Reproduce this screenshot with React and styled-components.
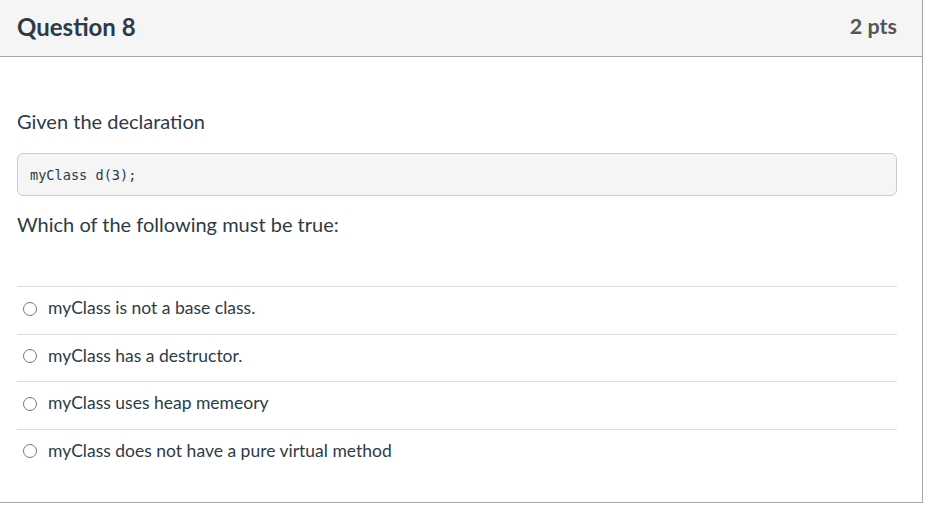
import React from 'react';
import styled, { createGlobalStyle } from 'styled-components';

const answers = [
  'myClass is not a base class.',
  'myClass has a destructor.',
  'myClass uses heap memeory',
  'myClass does not have a pure virtual method',
];

const App = () => {
  return (
    <>
      <GlobalStyle />
      <Card>
        <Header>
          <Title>Question 8</Title>
          <Points>2 pts</Points>
        </Header>
        <Body>
          <Text>Given the declaration</Text>
          <CodeBox>
            <code>myClass d(3);</code>
          </CodeBox>
          <Text $gap={16}>Which of the following must be true:</Text>
          <AnswerList>
            {answers.map((a) => (
              <Answer key={a}>
                <Radio />
                <AnswerText>{a}</AnswerText>
              </Answer>
            ))}
          </AnswerList>
        </Body>
      </Card>
    </>
  );
};

// START = STYLING
const GlobalStyle = createGlobalStyle`
  html, body {
    margin: 0;
    padding: 0;
    background: #fff;
  }
  body {
    font-family: Lato, "Open Sans", sans-serif;
    color: #2d3b45;
  }
`;

const Card = styled.div`
  width: 923px;
  box-sizing: border-box;
  border-right: 1px solid #a5a5a5;
  border-bottom: 1px solid #a5a5a5;
  background: #fff;
`;

const Header = styled.div`
  height: 57px;
  box-sizing: border-box;
  display: flex;
  align-items: center;
  justify-content: space-between;
  padding: 0 25px 4px 17px;
  background: #f5f5f5;
  border-bottom: 1px solid #a5a5a5;
`;

const Title = styled.h2`
  margin: 0;
  font-size: 24px;
  font-weight: 700;
  color: #2d3b45;
`;

const Points = styled.div`
  font-size: 21.5px;
  font-weight: 700;
  color: #555;
`;

const Body = styled.div`
  padding: 52px 25px 25.5px 17px;
  display: flex;
  flex-direction: column;
`;

const Text = styled.p`
  margin: ${(p) => p.$gap || 0}px 0 0;
  font-size: 20px;
  line-height: 24px;
  color: #2d3b45;
`;

const CodeBox = styled.div`
  margin-top: 20px;
  height: 43px;
  box-sizing: border-box;
  display: flex;
  align-items: center;
  padding: 0 12px;
  background: #f5f5f5;
  border: 1px solid #c7cdd1;
  border-radius: 6px;
  code {
    font-family: "DejaVu Sans Mono", "Liberation Mono", monospace;
    font-size: 13.6px;
    color: #2d3b45;
  }
`;

const AnswerList = styled.div`
  margin-top: 50px;
  display: flex;
  flex-direction: column;
`;

const Answer = styled.label`
  height: 47.5px;
  box-sizing: border-box;
  display: flex;
  align-items: center;
  gap: 11px;
  padding: 0 0 5px 6px;
  border-top: 1px solid #dcdcdc;
`;

const Radio = styled.span`
  width: 14px;
  height: 14px;
  box-sizing: border-box;
  border: 1px solid #767676;
  border-radius: 50%;
  background: #fff;
  flex-shrink: 0;
  margin-top: 2px;
`;

const AnswerText = styled.span`
  font-size: 17.5px;
  color: #2d3b45;
`;

export default App;
